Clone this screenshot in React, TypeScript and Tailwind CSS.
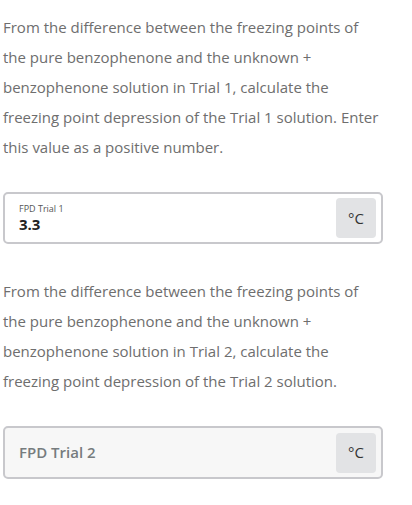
import React from "react";

const Unit = () => (
  <div className="w-[40px] h-[40px] rounded-[4px] bg-[#e2e3e5] flex items-center justify-center text-[15px] text-[#333]">
    °C
  </div>
);

export default function App() {
  return (
    <div
      className="w-[412px] h-[505px] bg-white pl-[3px] pr-[29px] pt-[12px]"
      style={{ fontFamily: '"Open Sans", sans-serif' }}
    >
      <p className="text-[15px] leading-[30px] text-[#6e6e6e]">
        From the difference between the freezing points of the pure benzophenone and the unknown +
        benzophenone solution in Trial 1, calculate the freezing point depression of the Trial 1
        solution. Enter this value as a positive number.
      </p>

      <div className="mt-[30px] h-[52px] border-2 border-[#c8c8cc] rounded-[5px] bg-white flex items-center pl-[14px] pr-[5px]">
        <div className="flex-1 flex flex-col">
          <span className="text-[9px] leading-[12px] text-[#555]">FPD Trial 1</span>
          <span className="text-[15px] leading-[18px] font-bold text-[#222]">3.3</span>
        </div>
        <Unit />
      </div>

      <p className="mt-[32px] text-[15px] leading-[30px] text-[#6e6e6e]">
        From the difference between the freezing points of the pure benzophenone and the unknown +
        benzophenone solution in Trial 2, calculate the freezing point depression of the Trial 2
        solution.
      </p>

      <div className="mt-[30px] h-[53px] border-2 border-[#c8c8cc] rounded-[5px] bg-[#f7f7f7] flex items-center pl-[14px] pr-[5px]">
        <span className="flex-1 text-[15px] font-semibold text-[#767c7e]">FPD Trial 2</span>
        <Unit />
      </div>
    </div>
  );
}
